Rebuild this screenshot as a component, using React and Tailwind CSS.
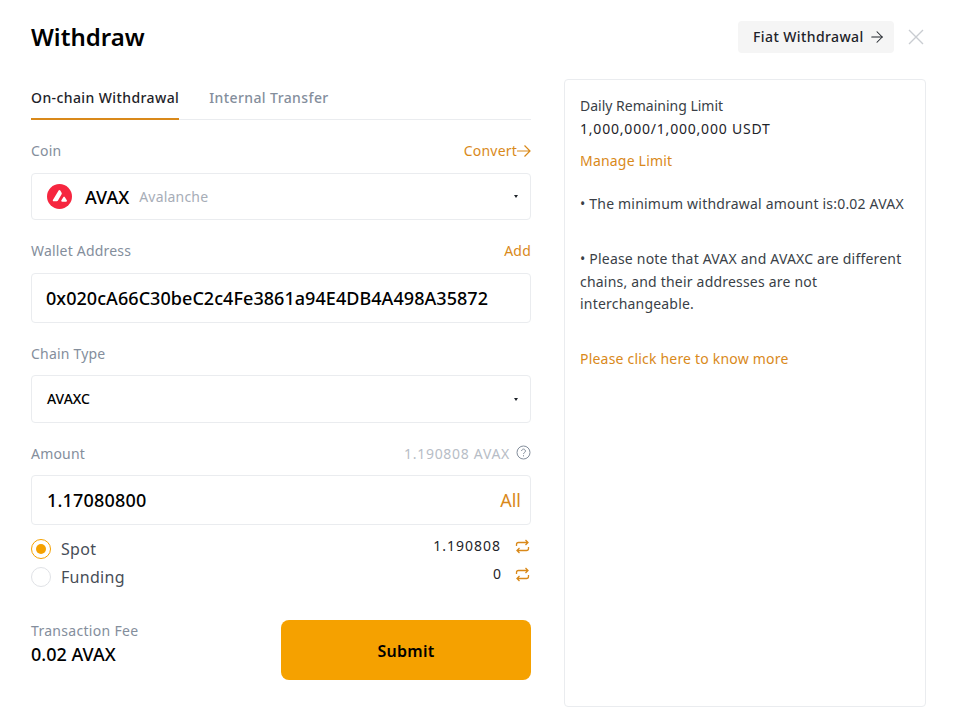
import { ArrowRight } from "lucide-react"

function Caret() {
  return <span className="w-0 h-0 border-x-[2.5px] border-x-transparent border-t-[3px] border-t-[#1e2329]" />
}

function Swap() {
  return (
    <svg width="15" height="15" viewBox="0 0 15 15" fill="none" stroke="#d9891a" strokeWidth="1.3" className="mr-px">
      <path d="M1.5 7V5.5Q1.5 3.5 3.5 3.5H13M10.5 1l2.5 2.5L10.5 6" />
      <path d="M13.5 8v1.5q0 2-2 2H2M4.5 9L2 11.5 4.5 14" />
    </svg>
  )
}

function Label({ left, right }) {
  return (
    <div className="flex items-center justify-between h-5 text-sm tracking-[0.2px]">
      <span className="text-[#848e9c]">{left}</span>
      {right}
    </div>
  )
}

export default function App() {
  return (
    <main className="w-[956px] h-[713px] bg-white text-[#1e2329] overflow-hidden font-['Noto_Sans',sans-serif]">
      {/* HEADER */}
      <header className="flex items-center justify-between h-8 mt-[21px] ml-[31px] mr-[32px]">
        <h1 className="text-2xl font-semibold text-black">Withdraw</h1>
        <div className="flex items-center gap-3.5">
          <button className="flex items-center gap-1 w-[156px] h-8 pl-[15px] bg-[#f5f5f5] rounded text-sm font-medium tracking-[0.4px]">
            Fiat Withdrawal
            <ArrowRight size={18} strokeWidth={1.4} />
          </button>
          <svg width="16" height="16" viewBox="0 0 16 16" fill="none" stroke="#c9ccd1" strokeWidth="1.4">
            <path d="M1 1l14 14M15 1L1 15" />
          </svg>
        </div>
      </header>

      <div className="flex items-start gap-[33px] ml-[31px] mt-[26px]">
        {/* FORM */}
        <section className="w-[500px]">
          <div className="flex gap-[30px] h-[41px] border-b border-[#eaecef] text-sm font-medium tracking-[0.4px]">
            <div className="h-[41px] pt-[9px] border-b-2 border-[#d9891a]">On-chain Withdrawal</div>
            <div className="pt-[9px] text-[#848e9c]">Internal Transfer</div>
          </div>

          <div className="mt-[21px]">
            <Label
              left="Coin"
              right={
                <span className="flex items-center text-[#d9891a]">
                  Convert
                  <svg width="14" height="14" viewBox="0 0 14 14" fill="none" stroke="#d9891a" strokeWidth="1.2">
                    <path d="M0 7h13M7.5 1.5L13 7l-5.5 5.5" />
                  </svg>
                </span>
              }
            />
          </div>
          <div className="flex items-center justify-between h-[47px] mt-3 pl-[15px] pr-3 border border-[#eaecef] rounded">
            <div className="flex items-center">
              <svg width="25" height="25" viewBox="0 0 25 25">
                <circle cx="12.5" cy="12.5" r="12.5" fill="#f6263f" />
                <path d="M11.6 6.4c.4-.7 1.3-.7 1.7 0l1.3 2.3c.3.5.3 1 0 1.5l-3.6 6.3c-.3.5-.8.8-1.4.8H6.8c-.8 0-1.2-.8-.9-1.4z" fill="#fff" />
                <path d="M16.3 13.2c.3-.6 1.2-.6 1.6 0l1.9 3.1c.4.6 0 1.4-.8 1.4h-3.8c-.8 0-1.2-.8-.8-1.4z" fill="#fff" />
              </svg>
              <span className="ml-[13px] text-lg font-medium text-black">AVAX</span>
              <span className="ml-2.5 text-sm tracking-[0.2px] text-[#a7adb7]">Avalanche</span>
            </div>
            <Caret />
          </div>

          <div className="mt-[21px]">
            <Label left="Wallet Address" right={<span className="text-[#d9891a]">Add</span>} />
          </div>
          <div className="flex items-center h-[50px] mt-3 px-3.5 border border-[#eaecef] rounded text-lg font-medium tracking-[0.05px] text-black">
            0x020cA66C30beC2c4Fe3861a94E4DB4A498A35872
          </div>

          <div className="mt-[21px]">
            <Label left="Chain Type" />
          </div>
          <div className="flex items-center justify-between h-12 mt-[11px] pl-[15px] pr-3 border border-[#eaecef] rounded text-sm font-medium text-black">
            AVAXC
            <Caret />
          </div>

          <div className="mt-[21px]">
            <Label
              left="Amount"
              right={
                <span className="flex items-center gap-1.5 tracking-[0.7px] text-[#b7bdc6]">
                  1.190808 AVAX
                  <svg width="15" height="15" viewBox="0 0 15 15" fill="none" stroke="#848e9c" className="-mt-1">
                    <circle cx="7.5" cy="7.5" r="6.5" />
                    <path d="M5.6 6a1.9 1.9 0 1 1 2.9 1.6c-.6.4-1 .7-1 1.4M7.5 10.2v1.2" />
                  </svg>
                </span>
              }
            />
          </div>
          <div className="flex items-center justify-between h-[50px] mt-[11px] pl-[15px] pr-[9px] border border-[#eaecef] rounded">
            <span className="text-lg font-medium tracking-[0.2px] text-black">1.17080800</span>
            <span className="text-lg text-[#d9891a]">All</span>
          </div>

          <div className="flex justify-between mt-2.5 h-[28px]">
            <div className="flex items-center gap-2.5">
              <span className="flex items-center justify-center w-5 h-5 rounded-full border border-[#f5a100]">
                <span className="w-2.5 h-2.5 rounded-full bg-[#f5a100]" />
              </span>
              <span className="text-base tracking-[0.3px] text-[#474d57]">Spot</span>
            </div>
            <div className="flex items-center gap-3.5 -mt-1.5 text-sm tracking-[1px]">
              1.190808
              <Swap />
            </div>
          </div>
          <div className="flex justify-between h-[28px]">
            <div className="flex items-center gap-2.5">
              <span className="w-5 h-5 rounded-full border border-[#e0e2e6]" />
              <span className="text-base tracking-[0.3px] text-[#474d57]">Funding</span>
            </div>
            <div className="flex items-center gap-3.5 -mt-1.5 text-sm">
              0
              <Swap />
            </div>
          </div>

          <div className="flex items-start justify-between mt-[29px]">
            <div className="pt-px">
              <p className="h-5 leading-5 text-sm tracking-[0.3px] text-[#848e9c]">Transaction Fee</p>
              <p className="mt-px text-lg leading-6 font-medium text-black">0.02 AVAX</p>
            </div>
            <button className="w-[250px] h-[60px] pt-px rounded-lg bg-[#f5a100] text-base font-semibold tracking-[0.3px] text-black">
              Submit
            </button>
          </div>
        </section>

        {/* SIDE PANEL */}
        <aside className="w-[362px] h-[628px] px-[15px] pt-[15px] border border-[#eaecef] rounded text-sm leading-[22.5px] tracking-[0.2px] text-[#3a3f47]">
          <p className="tracking-normal">Daily Remaining Limit</p>
          <p className="tracking-[0.8px] text-[#1e2329]">1,000,000/1,000,000 USDT</p>
          <p className="mt-[10px] text-[#d9891a]">Manage Limit</p>
          <p className="mt-[20px]">• The minimum withdrawal amount is:0.02 AVAX</p>
          <p className="mt-[33px]">
            • Please note that AVAX and AVAXC are different chains, and their addresses are not interchangeable.
          </p>
          <p className="mt-[32px] text-[#d9891a]">Please click here to know more</p>
        </aside>
      </div>
    </main>
  )
}
